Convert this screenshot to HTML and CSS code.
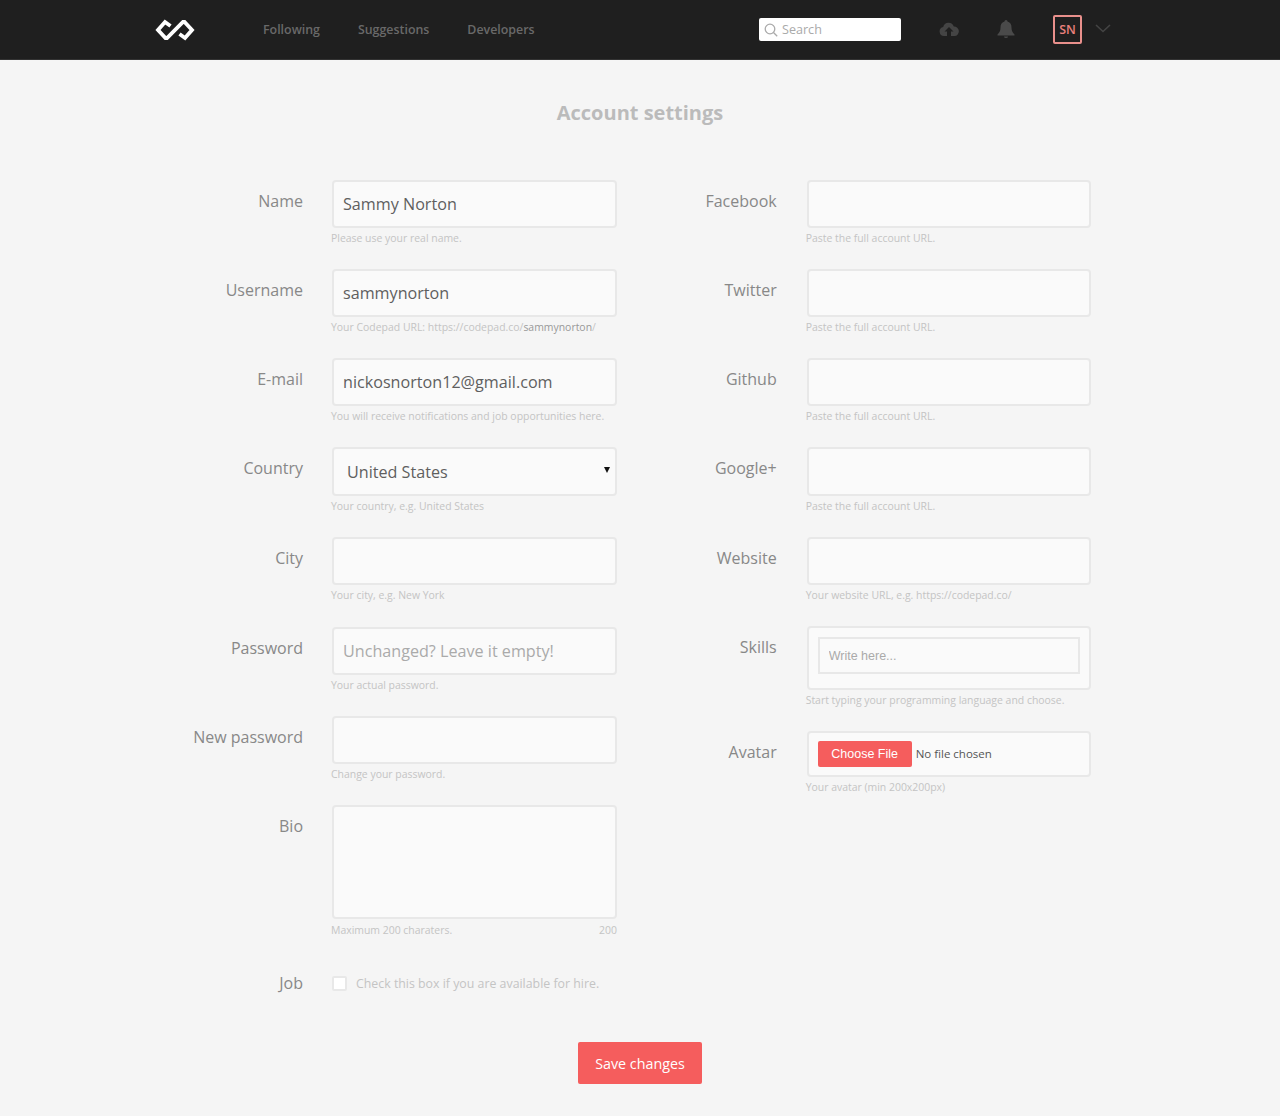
FILE: index.html
```html
<!DOCTYPE html>
<html lang="en">
<head>
    <meta charset="UTF-8">
    <title>Account settings</title>
    <link rel="stylesheet" href="styles.css">
</head>
<body>
    <header class="topbar">
        <a class="logo" href="#">
            <svg width="40" height="22" viewBox="0 0 40 22" fill="none" stroke="#fff" stroke-width="3.8">
                <path d="M15.5 7 L10 3 L3 11 L10.5 19 L12 19 L28 3 L29.5 3 L37 11 L30 19 L24.5 15"/>
            </svg>
        </a>
        <nav class="nav">
            <a href="#">Following</a>
            <a href="#">Suggestions</a>
            <a href="#">Developers</a>
        </nav>
        <div class="search">
            <svg width="14" height="14" viewBox="0 0 14 14" fill="none" stroke="#aaa" stroke-width="1.3">
                <circle cx="6" cy="6" r="4.8"/>
                <path d="M9.5 9.5 L13.2 13.2"/>
            </svg>
            <input type="text" placeholder="Search">
        </div>
        <svg class="icon-cloud" width="20" height="14" viewBox="0 0 20 14">
            <path fill="#444" d="M5 14 A4.5 4.5 0 0 1 4.2 5.1 A5.5 5.5 0 0 1 14.8 4.6 A4.7 4.7 0 0 1 15.5 14 H12 V9.5 H14.5 L10 5 L5.5 9.5 H8 V14 Z"/>
        </svg>
        <svg class="icon-bell" width="20" height="20" viewBox="0 0 20 20">
            <path fill="#4a4a4a" d="M10 1 A1.5 1.5 0 0 1 11.5 2.6 C14.5 3.4 15.5 6 15.5 8.5 C15.5 12 16.5 13.5 18.5 15.5 V16.5 H1.5 V15.5 C3.5 13.5 4.5 12 4.5 8.5 C4.5 6 5.5 3.4 8.5 2.6 A1.5 1.5 0 0 1 10 1 Z M8 17.5 H12 A2 1.5 0 0 1 8 17.5 Z"/>
        </svg>
        <div class="avatar">SN</div>
        <svg class="icon-chevron" width="16" height="9" viewBox="0 0 16 9" fill="none" stroke="#444" stroke-width="1.6">
            <path d="M1 1 L8 7.5 L15 1"/>
        </svg>
    </header>

    <main class="page">
        <h1 class="title">Account settings</h1>

        <form class="settings">
            <div class="col col-left">
                <div class="field">
                    <label>Name</label>
                    <div class="control">
                        <input class="box" type="text" value="Sammy Norton">
                        <p class="hint">Please use your real name.</p>
                    </div>
                </div>
                <div class="field">
                    <label>Username</label>
                    <div class="control">
                        <input class="box" type="text" value="sammynorton">
                        <p class="hint">Your Codepad URL: https://codepad.co/<span class="hint-strong">sammynorton</span>/</p>
                    </div>
                </div>
                <div class="field">
                    <label>E-mail</label>
                    <div class="control">
                        <input class="box" type="text" value="nickosnorton12@gmail.com">
                        <p class="hint">You will receive notifications and job opportunities here.</p>
                    </div>
                </div>
                <div class="field field-tall">
                    <label>Country</label>
                    <div class="control">
                        <select class="box">
                            <option>United States</option>
                        </select>
                        <p class="hint">Your country, e.g. United States</p>
                    </div>
                </div>
                <div class="field field-city">
                    <label>City</label>
                    <div class="control">
                        <input class="box" type="text">
                        <p class="hint">Your city, e.g. New York</p>
                    </div>
                </div>
                <div class="field">
                    <label>Password</label>
                    <div class="control">
                        <input class="box" type="password" placeholder="Unchanged? Leave it empty!">
                        <p class="hint">Your actual password.</p>
                    </div>
                </div>
                <div class="field">
                    <label>New password</label>
                    <div class="control">
                        <input class="box" type="password">
                        <p class="hint">Change your password.</p>
                    </div>
                </div>
                <div class="field field-bio">
                    <label>Bio</label>
                    <div class="control">
                        <textarea class="box"></textarea>
                        <p class="hint hint-row"><span>Maximum 200 charaters.</span><span>200</span></p>
                    </div>
                </div>
                <div class="field field-job">
                    <label>Job</label>
                    <div class="control check-row">
                        <input type="checkbox" class="check">
                        <span>Check this box if you are available for hire.</span>
                    </div>
                </div>
            </div>

            <div class="col col-right">
                <div class="field">
                    <label>Facebook</label>
                    <div class="control">
                        <input class="box" type="text">
                        <p class="hint">Paste the full account URL.</p>
                    </div>
                </div>
                <div class="field">
                    <label>Twitter</label>
                    <div class="control">
                        <input class="box" type="text">
                        <p class="hint">Paste the full account URL.</p>
                    </div>
                </div>
                <div class="field">
                    <label>Github</label>
                    <div class="control">
                        <input class="box" type="text">
                        <p class="hint">Paste the full account URL.</p>
                    </div>
                </div>
                <div class="field field-tall">
                    <label>Google+</label>
                    <div class="control">
                        <input class="box" type="text">
                        <p class="hint">Paste the full account URL.</p>
                    </div>
                </div>
                <div class="field">
                    <label>Website</label>
                    <div class="control">
                        <input class="box" type="text">
                        <p class="hint">Your website URL, e.g. https://codepad.co/</p>
                    </div>
                </div>
                <div class="field">
                    <label>Skills</label>
                    <div class="control">
                        <div class="box skills">
                            <input type="text" placeholder="Write here...">
                        </div>
                        <p class="hint">Start typing your programming language and choose.</p>
                    </div>
                </div>
                <div class="field">
                    <label>Avatar</label>
                    <div class="control">
                        <div class="box file">
                            <input type="file">
                        </div>
                        <p class="hint">Your avatar (min 200x200px)</p>
                    </div>
                </div>
            </div>
        </form>

        <div class="actions">
            <button class="save" type="button">Save changes</button>
        </div>
    </main>
</body>
</html>
```

FILE: styles.css
```css
:root {
    --bg: #f5f5f5;
    --dark: #1f1f1f;
    --red: #f55d5d;
    --line: #e8e8e8;
    --field: #fafafa;
    --label: #888;
    --hint: #c4c4c4;
}

* {
    box-sizing: border-box;
}

body {
    margin: 0;
    background: var(--bg);
    font-family: "Open Sans", sans-serif;
    color: #555;
}

.topbar {
    height: 60px;
    background: var(--dark);
    border-bottom: 1px solid #333;
    display: flex;
    align-items: center;
    padding-left: 155px;
}

.logo {
    display: flex;
    width: 40px;
}

.nav {
    display: flex;
    gap: 38px;
    margin-left: 68px;
    width: 496px;
}

.nav a {
    color: #696969;
    font-size: 12.4px;
    font-weight: 600;
    text-decoration: none;
}

.search {
    width: 142px;
    height: 23px;
    background: #fff;
    border-radius: 2px;
    display: flex;
    align-items: center;
    gap: 4px;
    padding-left: 5px;
}

.search input {
    border: none;
    outline: none;
    background: none;
    padding: 0;
    width: 110px;
    font: 12.6px "Open Sans", sans-serif;
}

.search input::placeholder {
    color: #aaa;
}

.icon-cloud {
    margin-left: 38px;
    margin-top: -2px;
}

.icon-bell {
    margin-left: 37px;
    margin-top: -2px;
}

.avatar {
    width: 29px;
    height: 29px;
    margin-left: 37px;
    border: 2px solid #e9908c;
    border-radius: 2px;
    color: #e9807c;
    font-size: 12.5px;
    font-weight: 600;
    display: flex;
    align-items: center;
    justify-content: center;
}

.icon-chevron {
    margin-left: 13px;
    margin-top: -2px;
}

.page {
    padding-top: 39px;
}

.title {
    margin: 0 0 53px;
    text-align: center;
    font-size: 20px;
    line-height: 28px;
    font-weight: 700;
    color: #bbb;
}

.settings {
    display: flex;
    padding-left: 160px;
}

.col-left {
    width: 480px;
}

.col-right {
    width: 451px;
}

.field {
    display: flex;
    margin-bottom: 20px;
}

.field label {
    font-size: 16px;
    line-height: 22px;
    padding-top: 10px;
    color: var(--label);
    text-align: right;
}

.col-left label {
    width: 143px;
    margin-right: 29px;
}

.col-right label {
    width: 137px;
    margin-right: 30px;
}

.control {
    width: 285px;
}

.box {
    display: block;
    width: 100%;
    height: 48px;
    padding: 0 9px;
    border: 2px solid var(--line);
    border-radius: 4px;
    background: var(--field);
    color: #5f5f5f;
    font: 16.15px "Open Sans", sans-serif;
    outline: none;
}

.box::placeholder {
    color: #aaa;
}

.field-tall .box {
    height: 49px;
}

select.box {
    appearance: none;
    padding-left: 13px;
    background: var(--field) url("data:image/svg+xml,%3Csvg xmlns='http://www.w3.org/2000/svg' width='6' height='6'%3E%3Cpath d='M0 0 H6 L3 6 Z' fill='%23111'/%3E%3C/svg%3E") no-repeat 270px 18px;
}

textarea.box {
    height: 114px;
    resize: none;
    padding-top: 10px;
}

.hint {
    margin: 0 0 0 -1px;
    height: 21px;
    font-size: 10.45px;
    line-height: 21px;
    color: var(--hint);
    white-space: nowrap;
}

.hint-strong {
    color: #999;
}

.hint-row {
    display: flex;
    justify-content: space-between;
    margin-top: 1px;
}

.field-city {
    margin-bottom: 21px;
}

.field-bio {
    margin-bottom: 31px;
}

.field-job label {
    padding-top: 0;
}

.check-row {
    display: flex;
    align-items: center;
    gap: 9px;
    width: auto;
    height: 22px;
    font-size: 12.35px;
    color: #c4c4c4;
}

.check {
    appearance: none;
    width: 15px;
    height: 15px;
    margin: 0;
    border: 2px solid var(--line);
    border-radius: 2px;
    background: #fff;
}

.skills {
    height: 64px;
    padding: 9px;
}

.skills input {
    display: block;
    width: 100%;
    height: 37px;
    padding: 0 9px;
    border: 2px solid var(--line);
    background: var(--field);
    font: 12.5px "Liberation Sans", sans-serif;
    outline: none;
}

.skills input::placeholder {
    color: #aaa;
}

.file {
    height: 46px;
    padding: 8px 9px;
}

.file input {
    display: block;
    width: 100%;
    font: 11.5px "Open Sans", sans-serif;
    color: #555;
}

.file input::file-selector-button {
    width: 94px;
    height: 26px;
    margin-right: 4px;
    border: none;
    border-radius: 2px;
    background: var(--red);
    color: #fff;
    font: 12.5px "Liberation Sans", sans-serif;
}

.actions {
    display: flex;
    justify-content: center;
    padding: 28px 0 32px;
}

.save {
    width: 124px;
    height: 42px;
    border: none;
    border-radius: 2px;
    background: var(--red);
    color: #fff;
    font: 14.3px "Open Sans", sans-serif;
}
```
